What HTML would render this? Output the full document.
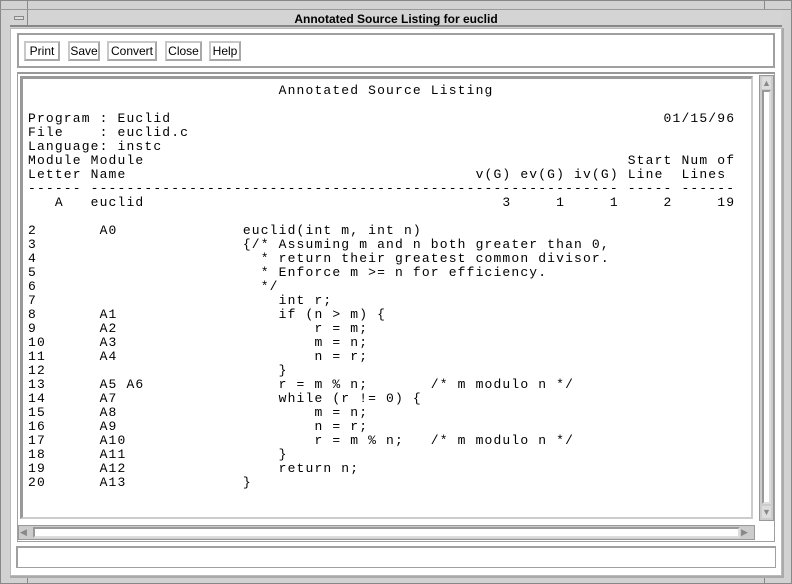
<!DOCTYPE html>
<html><head><style>
*{margin:0;padding:0;box-sizing:border-box}
body{width:792px;height:584px;background:#d2d2d2;position:relative;overflow:hidden;font-family:"Liberation Sans",sans-serif}
.a{position:absolute}
.btn{position:absolute;top:41px;height:20px;border:2px solid #a8a8a8;border-top-color:#c8c8c8;border-left-color:#c8c8c8;background:#fff;font:12px "Liberation Sans",sans-serif;line-height:16px;text-align:center;color:#000}
pre{position:absolute;left:28px;top:84px;font:13px/14px "Liberation Mono",monospace;letter-spacing:1.15px;color:#000}
</style></head><body>
<div class="a" style="left:0;top:0;width:792px;height:584px;border:1px solid #888"></div>
<div class="a" style="left:27px;top:0;width:1px;height:9px;background:#888"></div>
<div class="a" style="left:764px;top:0;width:1px;height:9px;background:#888"></div>
<div class="a" style="left:27px;top:575px;width:1px;height:9px;background:#888"></div>
<div class="a" style="left:764px;top:575px;width:1px;height:9px;background:#888"></div>
<div class="a" style="left:0;top:9px;width:792px;height:1px;background:#999"></div>
<div class="a" style="left:10px;top:10px;width:772px;height:17px;background:#d4d4d4;border-bottom:2px solid #888"></div>
<div class="a" style="left:27px;top:10px;width:1px;height:17px;background:#888"></div>
<div class="a" style="left:14px;top:16px;width:10px;height:4px;border:1px solid #888;background:#ddd"></div>
<div class="a" style="left:0;top:12px;width:792px;text-align:center;font:bold 12px/14px 'Liberation Sans',sans-serif">Annotated Source Listing for euclid</div>
<div class="a" style="left:10px;top:28px;width:772px;height:548px;background:#fff;border:1px solid #bbb"></div>
<div class="a" style="left:782px;top:28px;width:2px;height:548px;background:#aaa"></div>
<div class="a" style="left:10px;top:576px;width:774px;height:2px;background:#aaa"></div>
<div class="a" style="left:17px;top:33px;width:758px;height:35px;border:2px solid #a0a0a0"></div>
<div class="btn" style="left:24px;width:36px">Print</div>
<div class="btn" style="left:68px;width:32px">Save</div>
<div class="btn" style="left:107px;width:50px">Convert</div>
<div class="btn" style="left:165px;width:37px">Close</div>
<div class="btn" style="left:209px;width:32px">Help</div>
<div class="a" style="left:17px;top:72px;width:758px;height:470px;border:1px solid #a0a0a0;border-top:2px solid #999"></div>
<div class="a" style="left:20px;top:76px;width:733px;height:443px;border:3px solid #999;border-right:2px solid #ccc;border-bottom:2px solid #ccc"></div>
<div class="a" style="left:759px;top:75px;width:15px;height:446px;background:#ccc;border:1px solid #999"></div>
<div class="a" style="left:762px;top:90px;width:9px;height:414px;background:#fff;border:2px solid #999;border-right-color:#ddd;border-bottom-color:#ddd"></div>
<div class="a" style="left:762px;top:77px;width:9px;height:12px;background:#ddd;font-size:9px;line-height:12px;text-align:center;color:#888">▲</div>
<div class="a" style="left:762px;top:506px;width:9px;height:12px;background:#ddd;font-size:9px;line-height:12px;text-align:center;color:#888">▼</div>
<div class="a" style="left:18px;top:525px;width:737px;height:15px;background:#ccc;border:1px solid #999"></div>
<div class="a" style="left:33px;top:527px;width:707px;height:11px;background:#fff;border:2px solid #999;border-right-color:#ddd;border-bottom-color:#ddd"></div>
<div class="a" style="left:20px;top:527px;width:12px;height:11px;font-size:9px;line-height:11px;color:#888">◀</div>
<div class="a" style="left:741px;top:527px;width:12px;height:11px;font-size:9px;line-height:11px;color:#888">▶</div>
<div class="a" style="left:16px;top:546px;width:760px;height:22px;border:2px solid #a0a0a0;border-right-width:1px;border-bottom-width:1px"></div>
<pre>                            Annotated Source Listing

Program : Euclid                                                       01/15/96
File    : euclid.c
Language: instc
Module Module                                                      Start Num of
Letter Name                                       v(G) ev(G) iv(G) Line  Lines
------ ----------------------------------------------------------- ----- ------
   A   euclid                                        3     1     1     2     19

2       A0              euclid(int m, int n)
3                       {/* Assuming m and n both greater than 0,
4                         * return their greatest common divisor.
5                         * Enforce m >= n for efficiency.
6                         */
7                           int r;
8       A1                  if (n > m) {
9       A2                      r = m;
10      A3                      m = n;
11      A4                      n = r;
12                          }
13      A5 A6               r = m % n;       /* m modulo n */
14      A7                  while (r != 0) {
15      A8                      m = n;
16      A9                      n = r;
17      A10                     r = m % n;   /* m modulo n */
18      A11                 }
19      A12                 return n;
20      A13             }</pre>
</body></html>
